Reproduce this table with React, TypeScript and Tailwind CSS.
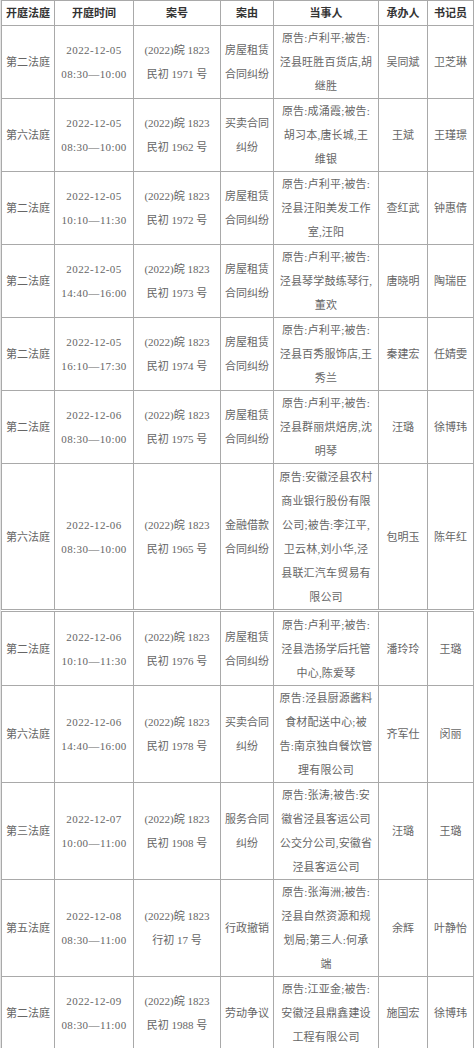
import React from 'react';

// Hearing schedule row
interface Hearing {
  court: string;
  date: string;
  time: string;
  caseNo: string;
  cause: string[];
  parties: string[];
  judge: string;
  clerk: string;
  h: string;
  double?: boolean;
}

const rows: Hearing[] = [
  { court: '第二法庭', date: '2022-12-05', time: '08:30—10:00', caseNo: '民初 1971 号', cause: ['房屋租赁', '合同纠纷'], parties: ['原告:卢利平;被告:', '泾县旺胜百货店,胡', '继胜'], judge: '吴同斌', clerk: '卫芝琳', h: 'h-[73px]' },
  { court: '第六法庭', date: '2022-12-05', time: '08:30—10:00', caseNo: '民初 1962 号', cause: ['买卖合同', '纠纷'], parties: ['原告:成涌霞;被告:', '胡习本,唐长城,王', '维银'], judge: '王斌', clerk: '王瑾璟', h: 'h-[73px]' },
  { court: '第二法庭', date: '2022-12-05', time: '10:10—11:30', caseNo: '民初 1972 号', cause: ['房屋租赁', '合同纠纷'], parties: ['原告:卢利平;被告:', '泾县汪阳美发工作', '室,汪阳'], judge: '查红武', clerk: '钟惠倩', h: 'h-[73px]' },
  { court: '第二法庭', date: '2022-12-05', time: '14:40—16:00', caseNo: '民初 1973 号', cause: ['房屋租赁', '合同纠纷'], parties: ['原告:卢利平;被告:', '泾县琴学鼓练琴行,', '董欢'], judge: '唐晓明', clerk: '陶瑞臣', h: 'h-[73px]' },
  { court: '第二法庭', date: '2022-12-05', time: '16:10—17:30', caseNo: '民初 1974 号', cause: ['房屋租赁', '合同纠纷'], parties: ['原告:卢利平;被告:', '泾县百秀服饰店,王', '秀兰'], judge: '秦建宏', clerk: '任婧雯', h: 'h-[73px]' },
  { court: '第二法庭', date: '2022-12-06', time: '08:30—10:00', caseNo: '民初 1975 号', cause: ['房屋租赁', '合同纠纷'], parties: ['原告:卢利平;被告:', '泾县群丽烘焙房,沈', '明琴'], judge: '汪璐', clerk: '徐博玮', h: 'h-[72px]' },
  { court: '第六法庭', date: '2022-12-06', time: '08:30—10:00', caseNo: '民初 1965 号', cause: ['金融借款', '合同纠纷'], parties: ['原告:安徽泾县农村', '商业银行股份有限', '公司;被告:李江平,', '卫云林,刘小华,泾', '县联汇汽车贸易有', '限公司'], judge: '包明玉', clerk: '陈年红', h: 'h-[147px]' },
  { court: '第二法庭', date: '2022-12-06', time: '10:10—11:30', caseNo: '民初 1976 号', cause: ['房屋租赁', '合同纠纷'], parties: ['原告:卢利平;被告:', '泾县浩扬学后托管', '中心,陈爱琴'], judge: '潘玲玲', clerk: '王璐', h: 'h-[75px]', double: true },
  { court: '第六法庭', date: '2022-12-06', time: '14:40—16:00', caseNo: '民初 1978 号', cause: ['买卖合同', '纠纷'], parties: ['原告:泾县厨源酱料', '食材配送中心;被', '告:南京独自餐饮管', '理有限公司'], judge: '齐军仕', clerk: '闵丽', h: 'h-[97px]' },
  { court: '第三法庭', date: '2022-12-07', time: '10:00—11:00', caseNo: '民初 1908 号', cause: ['服务合同', '纠纷'], parties: ['原告:张涛;被告:安', '徽省泾县客运公司', '公交分公司,安徽省', '泾县客运公司'], judge: '汪璐', clerk: '王璐', h: 'h-[97px]' },
  { court: '第五法庭', date: '2022-12-08', time: '08:30—11:00', caseNo: '行初 17 号', cause: ['行政撤销'], parties: ['原告:张海洲;被告:', '泾县自然资源和规', '划局;第三人:何承', '端'], judge: '余辉', clerk: '叶静怡', h: 'h-[96px]' },
  { court: '第二法庭', date: '2022-12-09', time: '08:30—11:00', caseNo: '民初 1988 号', cause: ['劳动争议'], parties: ['原告:江亚金;被告:', '安徽泾县鼎鑫建设', '工程有限公司'], judge: '施国宏', clerk: '徐博玮', h: 'h-[72px]' },
];

const headers = ['开庭法庭', '开庭时间', '案号', '案由', '当事人', '承办人', '书记员'];

const Lines = ({ items }: { items: string[] }) => (
  <>
    {items.map((t, i) => (
      <div key={i} className="whitespace-nowrap">
        {t}
      </div>
    ))}
  </>
);

export default function App() {
  const td = 'border border-[#a9a9a9] p-0 text-center align-middle';
  return (
    <div
      className="w-[474px] min-h-[1048px] bg-[#e4e4e4] px-[1px] text-[11px] leading-[24px] text-[#666]"
      style={{ fontFamily: '"Liberation Serif", "Noto Sans CJK SC", serif' }}
    >
      <table className="w-[472px] table-fixed border-collapse bg-white">
        <colgroup>
          <col className="w-[53px]" />
          <col className="w-[79px]" />
          <col className="w-[87px]" />
          <col className="w-[53px]" />
          <col className="w-[105px]" />
          <col className="w-[49px]" />
          <col className="w-[46px]" />
        </colgroup>
        <thead>
          <tr className="h-[25px]">
            {headers.map((h) => (
              <th key={h} className={`${td} font-bold text-[#333]`}>
                {h}
              </th>
            ))}
          </tr>
        </thead>
        <tbody>
          {rows.map((r, i) => {
            const c = r.double ? `${td} border-t-[3px] border-t-[#a9a9a9] border-double` : td;
            return (
              <tr key={i} className={r.h}>
                <td className={c}>{r.court}</td>
                <td className={`${c} tracking-[0.4px]`}>
                  <div>{r.date}</div>
                  <div>{r.time}</div>
                </td>
                <td className={c}>
                  <div className="whitespace-nowrap">(2022)皖 1823</div>
                  <div>{r.caseNo}</div>
                </td>
                <td className={c}>
                  <Lines items={r.cause} />
                </td>
                <td className={`${c} tracking-[0.2px]`}>
                  <Lines items={r.parties} />
                </td>
                <td className={c}>{r.judge}</td>
                <td className={c}>{r.clerk}</td>
              </tr>
            );
          })}
        </tbody>
      </table>
    </div>
  );
}
